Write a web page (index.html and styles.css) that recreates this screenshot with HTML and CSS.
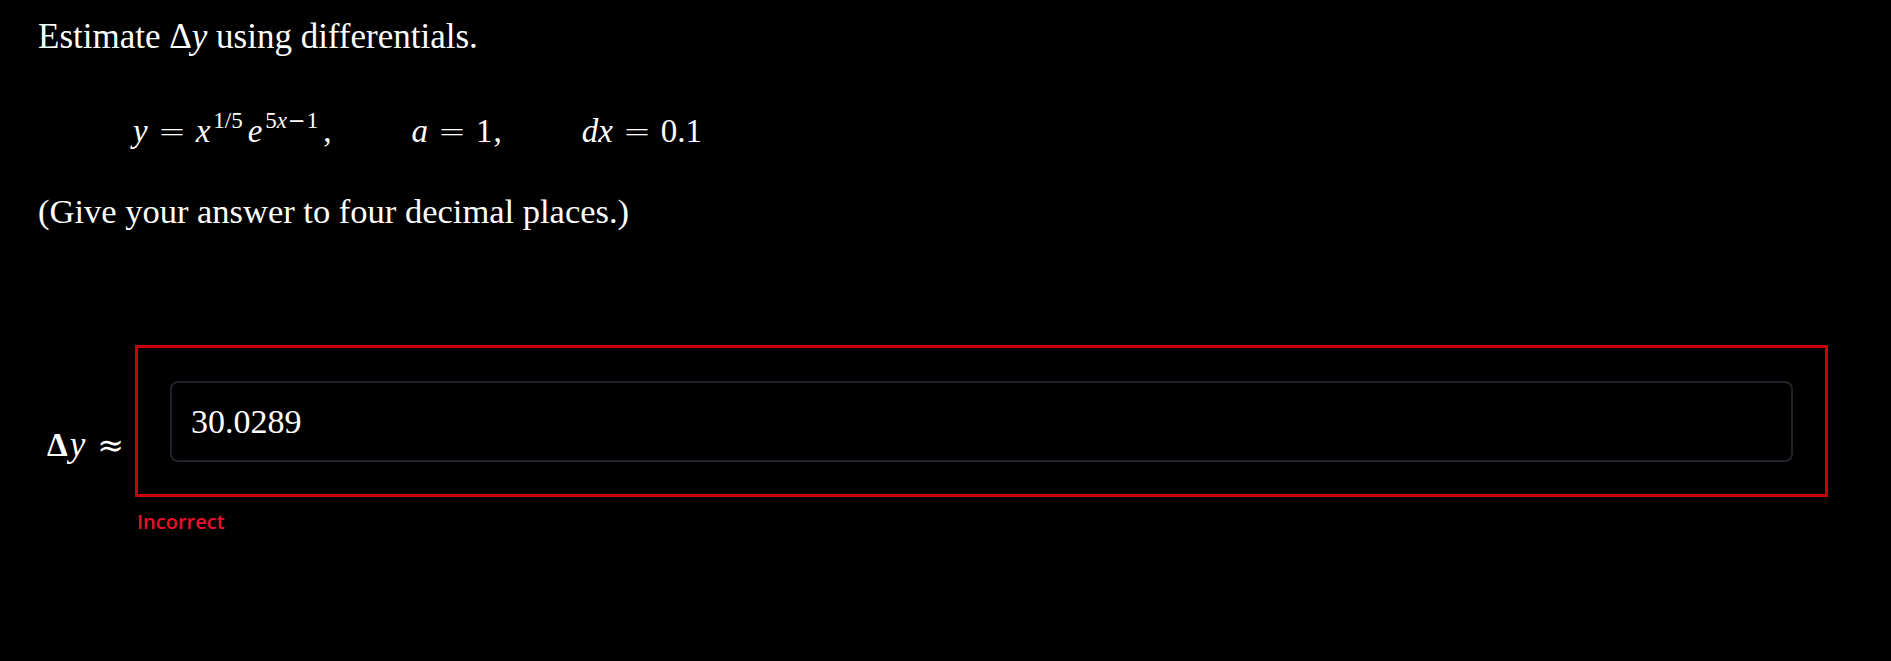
FILE: index.html
```html
<!DOCTYPE html>
<html lang="en">
<head>
<meta charset="utf-8">
<title>Estimate Δy using differentials</title>
<link rel="stylesheet" href="styles.css">
</head>
<body>
<main class="question">
  <p class="text line-one">Estimate <span class="m-up">Δ</span><span class="m-it">y</span> using differentials.</p>
  <div class="math-display">
    <span class="group">
      <span class="m-it">y</span><span class="op">=</span><span class="m-it">x</span><sup class="sup">1/5</sup><span class="m-it e">e</span><sup class="sup">5<span class="m-it">x</span><span class="minus">−</span>1</sup><span class="comma">,</span>
    </span>
    <span class="group gap">
      <span class="m-it">a</span><span class="op">=</span><span>1</span><span class="comma tight">,</span>
    </span>
    <span class="group gap">
      <span class="m-it">d</span><span class="m-it">x</span><span class="op">=</span><span>0.1</span>
    </span>
  </div>
  <p class="text line-three">(Give your answer to four decimal places.)</p>

  <div class="answer-row">
    <div class="answer-label"><span class="m-up delta">Δ</span><span class="m-it">y</span><span class="approx">≈</span></div>
    <div class="answer-col">
      <div class="answer-box">
        <input class="answer-input" type="text" value="30.0289">
      </div>
      <div class="feedback">Incorrect</div>
    </div>
  </div>
</main>
</body>
</html>
```

FILE: styles.css
```css
html, body {
  margin: 0;
  padding: 0;
  background: #000;
  color: #fff;
}

body {
  font-family: "Liberation Serif", "Times New Roman", serif;
  width: 1891px;
  height: 661px;
  overflow: hidden;
}

.question {
  display: flex;
  flex-direction: column;
  padding: 16px 0 0 38px;
}

.text {
  margin: 0;
  font-size: 35px;
  line-height: 42px;
  white-space: nowrap;
}

.m-it {
  font-style: italic;
}

.m-up {
  font-style: normal;
}

.math-display {
  margin: 52px 0 0 95px;
  font-size: 33px;
  line-height: 42px;
  height: 42px;
  white-space: nowrap;
  display: flex;
  align-items: baseline;
}

.group {
  display: inline-flex;
  align-items: baseline;
}

.group.gap {
  margin-left: 80px;
}

.op {
  font-family: "DejaVu Sans", sans-serif;
  font-size: 31px;
  font-weight: 300;
  margin: 0 11px;
  display: inline-block;
  transform: scaleX(1.08);
}

.sup {
  font-size: 23px;
  line-height: 1;
  position: relative;
  top: -14px;
  vertical-align: baseline;
  margin-left: 3px;
}

.e {
  margin-left: 5px;
}

.minus {
  font-family: "DejaVu Sans", sans-serif;
  font-size: 21px;
  margin: 0 1px;
}

.comma {
  margin-left: 5px;
}

.comma.tight {
  margin-left: 1px;
}

.line-three {
  margin-top: 38px;
  font-size: 34.5px;
}

.answer-row {
  display: flex;
  align-items: flex-start;
  margin: 113px 0 0 9px;
}

.answer-label {
  width: 88px;
  font-size: 35px;
  line-height: 40px;
  margin-top: 80px;
  white-space: nowrap;
}

.delta {
  font-weight: bold;
  font-size: 33px;
  margin-right: 2px;
}

.approx {
  font-family: "DejaVu Serif", serif;
  font-size: 32px;
  margin-left: 12px;
}

.answer-col {
  display: flex;
  flex-direction: column;
  align-items: flex-start;
}

.answer-box {
  box-sizing: border-box;
  width: 1693px;
  height: 152px;
  border: 3px solid #c8000a;
  padding: 33px 32px 0 32px;
}

.answer-input {
  box-sizing: border-box;
  display: block;
  width: 100%;
  height: 81px;
  margin: 0;
  padding: 0 19px;
  background: #000;
  color: #fff;
  border: 2px solid #1f2329;
  border-radius: 8px;
  font-family: "Liberation Serif", "Times New Roman", serif;
  font-size: 34px;
  outline: none;
}

.feedback {
  font-family: "Open Sans", "Noto Sans", sans-serif;
  font-size: 20px;
  font-weight: 600;
  line-height: 24px;
  color: #e8112d;
  margin: 13px 0 0 2px;
}
```
